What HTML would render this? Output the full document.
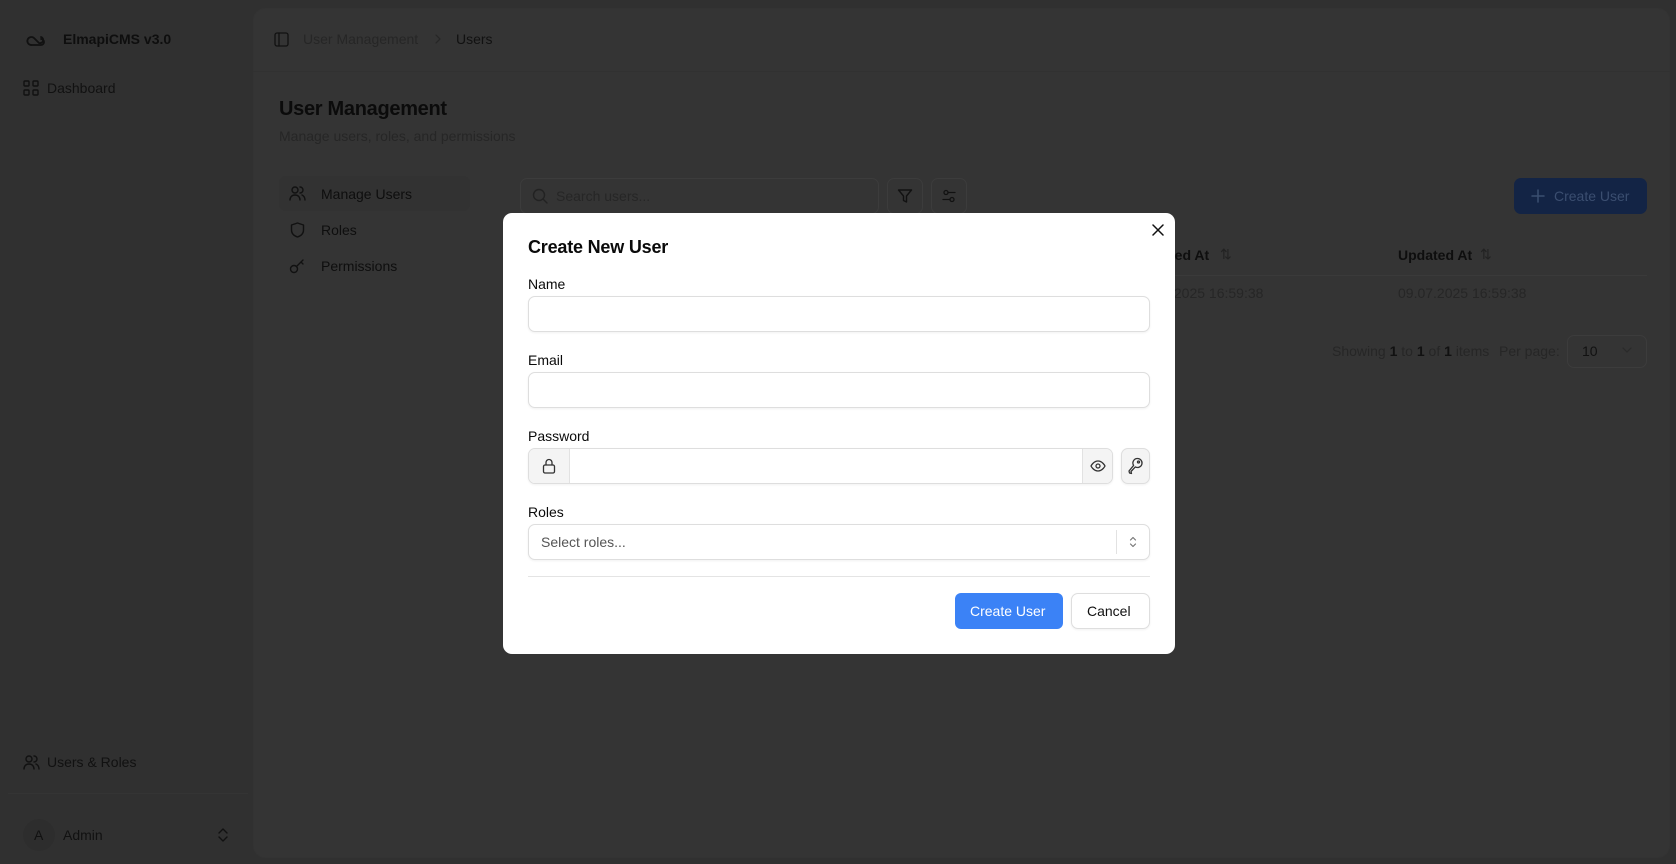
<!DOCTYPE html>
<html><head><style>
*{box-sizing:border-box;margin:0;padding:0}
body{width:1676px;height:864px;background:#303030;font-family:"Liberation Sans",sans-serif;position:relative;overflow:hidden;color:#0e0e0e}
.a{position:absolute;white-space:nowrap}
svg{position:absolute;fill:none;stroke-linecap:round;stroke-linejoin:round}
.main{position:absolute;left:253px;top:8px;width:1417px;height:850px;background:#343434;border-radius:12px;border:1px solid #333}
.box{position:absolute;border:1px solid #3c3c3c;border-radius:7px}
.modal{position:absolute;left:503px;top:213px;width:672px;height:441px;background:#fff;border-radius:9px}
.m{position:absolute;white-space:nowrap;color:#0a0a0a}
.lbl{font-size:14px}
.inp{position:absolute;border:1px solid #dedede;border-radius:7px;background:#fff;box-shadow:0 1px 2px rgba(0,0,0,.06)}
</style></head><body>
<div class="main"></div>
<div style="position:absolute;left:253px;top:71px;width:1417px;height:1px;background:#313131"></div>

<!-- sidebar -->
<svg style="left:25px;top:30px" width="22" height="20" viewBox="0 0 22 20" stroke="#111" stroke-width="1.8"><path d="M6 15a4 4 0 1 1 3-7l5 5a3 3 0 1 0 2-6"/><path d="M6 15h10a3 3 0 0 0 0-6"/></svg>
<div class="a" style="left:63px;top:31px;font-size:14px;font-weight:bold;color:#0e0e0e">ElmapiCMS v3.0</div>
<svg style="left:23px;top:80px" width="16" height="16" viewBox="0 0 16 16" stroke="#111" stroke-width="1.4"><rect x="1" y="1" width="5" height="5" rx="1"/><rect x="10" y="1" width="5" height="5" rx="1"/><rect x="1" y="10" width="5" height="5" rx="1"/><rect x="10" y="10" width="5" height="5" rx="1"/></svg>
<div class="a" style="left:47px;top:80px;font-size:14px;color:#111">Dashboard</div>
<div style="position:absolute;left:8px;top:793px;width:240px;height:1px;background:#343434"></div>
<svg style="left:23px;top:754px" width="17" height="16" viewBox="0 0 17 16" stroke="#111" stroke-width="1.4"><circle cx="6" cy="5" r="3"/><path d="M1 15c0-3 2-5 5-5s5 2 5 5M11 2a3 3 0 0 1 0 6M13 10c2 1 3 3 3 5"/></svg>
<div class="a" style="left:47px;top:754px;font-size:14px;color:#111">Users &amp; Roles</div>
<div style="position:absolute;left:23px;top:819px;width:32px;height:32px;border-radius:50%;background:#2d2d2d"></div>
<div class="a" style="left:34px;top:827px;font-size:14px;color:#111">A</div>
<div class="a" style="left:63px;top:827px;font-size:14px;color:#111">Admin</div>
<svg style="left:217px;top:827px" width="12" height="16" viewBox="0 0 12 16" stroke="#111" stroke-width="1.4"><path d="M2 6l4-4 4 4M2 10l4 4 4-4"/></svg>

<!-- header -->
<svg style="left:274px;top:32px" width="15" height="15" viewBox="0 0 15 15" stroke="#111" stroke-width="1.3"><rect x="1" y="1" width="13" height="13" rx="2"/><path d="M5 1v13"/></svg>
<div class="a" style="left:303px;top:31px;font-size:14px;color:#262626">User Management</div>
<svg style="left:434px;top:34px" width="8" height="10" viewBox="0 0 8 10" stroke="#262626" stroke-width="1.2"><path d="M2 1l4 4-4 4"/></svg>
<div class="a" style="left:456px;top:31px;font-size:14px;color:#111">Users</div>

<div class="a" style="left:279px;top:98px;font-size:20px;font-weight:bold;color:#0b0b0b;letter-spacing:-.3px">User Management</div>
<div class="a" style="left:279px;top:128px;font-size:14px;color:#262626">Manage users, roles, and permissions</div>

<div style="position:absolute;left:279px;top:176px;width:191px;height:35px;background:#323232;border-radius:7px"></div>
<svg style="left:289px;top:185px" width="17" height="16" viewBox="0 0 17 16" stroke="#111" stroke-width="1.4"><circle cx="6" cy="5" r="3"/><path d="M1 15c0-3 2-5 5-5s5 2 5 5M11 2a3 3 0 0 1 0 6M13 10c2 1 3 3 3 5"/></svg>
<div class="a" style="left:321px;top:186px;font-size:14px;color:#0e0e0e">Manage Users</div>
<svg style="left:290px;top:222px" width="15" height="16" viewBox="0 0 15 16" stroke="#111" stroke-width="1.4"><path d="M7.5 1l6 2v5c0 4-3 6-6 7-3-1-6-3-6-7V3z"/></svg>
<div class="a" style="left:321px;top:222px;font-size:14px;color:#0e0e0e">Roles</div>
<svg style="left:289px;top:258px" width="17" height="16" viewBox="0 0 17 16" stroke="#111" stroke-width="1.4"><circle cx="5" cy="11" r="3.5"/><path d="M7.5 8.5L14 2M12 4l2 2"/></svg>
<div class="a" style="left:321px;top:258px;font-size:14px;color:#0e0e0e">Permissions</div>

<div class="box" style="left:520px;top:178px;width:359px;height:36px"></div>
<svg style="left:532px;top:188px" width="16" height="16" viewBox="0 0 16 16" stroke="#222" stroke-width="1.4"><circle cx="7" cy="7" r="5.5"/><path d="M11 11l4 4"/></svg>
<div class="a" style="left:556px;top:188px;font-size:14px;color:#262626">Search users...</div>
<div class="box" style="left:887px;top:178px;width:36px;height:36px"></div>
<svg style="left:897px;top:188px" width="16" height="16" viewBox="0 0 16 16" stroke="#111" stroke-width="1.4"><path d="M1.5 2h13l-5 6v6l-3-1.5V8z"/></svg>
<div class="box" style="left:931px;top:178px;width:36px;height:36px"></div>
<svg style="left:941px;top:188px" width="16" height="16" viewBox="0 0 16 16" stroke="#111" stroke-width="1.3"><circle cx="5" cy="4.5" r="2"/><circle cx="11" cy="11.5" r="2"/><path d="M7 4.5h7M2 11.5h7"/></svg>

<div style="position:absolute;left:1514px;top:178px;width:133px;height:36px;background:#132445;border-radius:7px"></div>
<svg style="left:1531px;top:189px" width="14" height="14" viewBox="0 0 14 14" stroke="#3b4e70" stroke-width="1.5"><path d="M7 1v12M1 7h12"/></svg>
<div class="a" style="left:1554px;top:188px;font-size:14px;color:#3b4e70">Create User</div>

<div style="position:absolute;left:1150px;top:240px;width:497px;height:36px;border-bottom:1px solid #3a3a3a"></div>
<div class="a" style="left:1170px;top:247px;font-size:14px;font-weight:bold;color:#0e0e0e">ted At</div>
<div class="a" style="left:1220px;top:246px;font-size:14px;color:#222">⇅</div>
<div class="a" style="left:1398px;top:247px;font-size:14px;font-weight:bold;color:#0e0e0e">Updated At</div>
<div class="a" style="left:1480px;top:246px;font-size:14px;color:#222">⇅</div>
<div class="a" style="left:1170px;top:285px;font-size:14px;color:#262626">.2025 16:59:38</div>
<div class="a" style="left:1398px;top:285px;font-size:14px;color:#262626">09.07.2025 16:59:38</div>
<div class="a" style="left:1332px;top:343px;font-size:14px;color:#262626">Showing <b style="color:#111">1</b> to <b style="color:#111">1</b> of <b style="color:#111">1</b> items</div>
<div class="a" style="left:1499px;top:343px;font-size:14px;color:#262626">Per page:</div>
<div class="box" style="left:1567px;top:335px;width:80px;height:33px"></div>
<div class="a" style="left:1582px;top:343px;font-size:14px;color:#111">10</div>
<svg style="left:1622px;top:346px" width="10" height="8" viewBox="0 0 10 8" stroke="#2a2a2a" stroke-width="1.2"><path d="M1 2l4 4 4-4"/></svg>

<!-- modal -->
<div class="modal"></div>
<svg style="left:1152px;top:224px" width="12" height="12" viewBox="0 0 12 12" stroke="#111" stroke-width="1.5"><path d="M1 1l10 10M11 1L1 11"/></svg>
<div class="m" style="left:528px;top:237px;font-size:18px;font-weight:bold;letter-spacing:-.2px">Create New User</div>
<div class="m lbl" style="left:528px;top:276px">Name</div>
<div class="inp" style="left:528px;top:296px;width:622px;height:36px"></div>
<div class="m lbl" style="left:528px;top:352px">Email</div>
<div class="inp" style="left:528px;top:372px;width:622px;height:36px"></div>
<div class="m lbl" style="left:528px;top:428px">Password</div>
<div class="inp" style="left:528px;top:448px;width:585px;height:36px;overflow:hidden">
  <div style="position:absolute;left:0;top:0;width:41px;height:34px;background:#f4f4f4;border-right:1px solid #e2e2e2"></div>
  <div style="position:absolute;right:0;top:0;width:30px;height:34px;background:#f4f4f4;border-left:1px solid #e2e2e2"></div>
</div>
<svg style="left:541px;top:458px" width="16" height="16" viewBox="0 0 16 16" stroke="#333" stroke-width="1.3"><rect x="2.5" y="7" width="11" height="8" rx="1.5"/><path d="M5 7V4.5a3 3 0 0 1 6 0V7"/></svg>
<svg style="left:1090px;top:458px" width="16" height="16" viewBox="0 0 16 16" stroke="#333" stroke-width="1.3"><path d="M1 8s2.5-5 7-5 7 5 7 5-2.5 5-7 5-7-5-7-5z"/><circle cx="8" cy="8" r="2"/></svg>
<div class="inp" style="left:1121px;top:448px;width:29px;height:36px;background:#f4f4f4"></div>
<svg style="left:1127px;top:457px" width="17" height="18" viewBox="0 0 17 18" stroke="#333" stroke-width="1.3"><path d="M10.5 1.5a4.5 4.5 0 1 1-2.2 8.4L4 14.5 4.5 16.5 2.5 16 2 14l4.6-5.6A4.5 4.5 0 0 1 10.5 1.5z"/><circle cx="11.5" cy="5" r="1"/></svg>
<div class="m lbl" style="left:528px;top:504px">Roles</div>
<div class="inp" style="left:528px;top:524px;width:622px;height:36px"></div>
<div style="position:absolute;left:1116px;top:530px;width:1px;height:24px;background:#e2e2e2"></div>
<div class="m" style="left:541px;top:534px;font-size:14px;color:#555">Select roles...</div>
<svg style="left:1128px;top:535px" width="10" height="14" viewBox="0 0 10 14" stroke="#777" stroke-width="1.2"><path d="M2.5 5L5 2.5 7.5 5M2.5 9L5 11.5 7.5 9"/></svg>
<div style="position:absolute;left:528px;top:576px;width:622px;height:1px;background:#e4e4e4"></div>
<div style="position:absolute;left:955px;top:593px;width:108px;height:36px;background:#3b82f6;border-radius:6px"></div>
<div class="m" style="left:970px;top:603px;font-size:14px;color:#fff">Create User</div>
<div class="inp" style="left:1071px;top:593px;width:79px;height:36px"></div>
<div class="m" style="left:1087px;top:603px;font-size:14px;color:#111">Cancel</div>
</body></html>
